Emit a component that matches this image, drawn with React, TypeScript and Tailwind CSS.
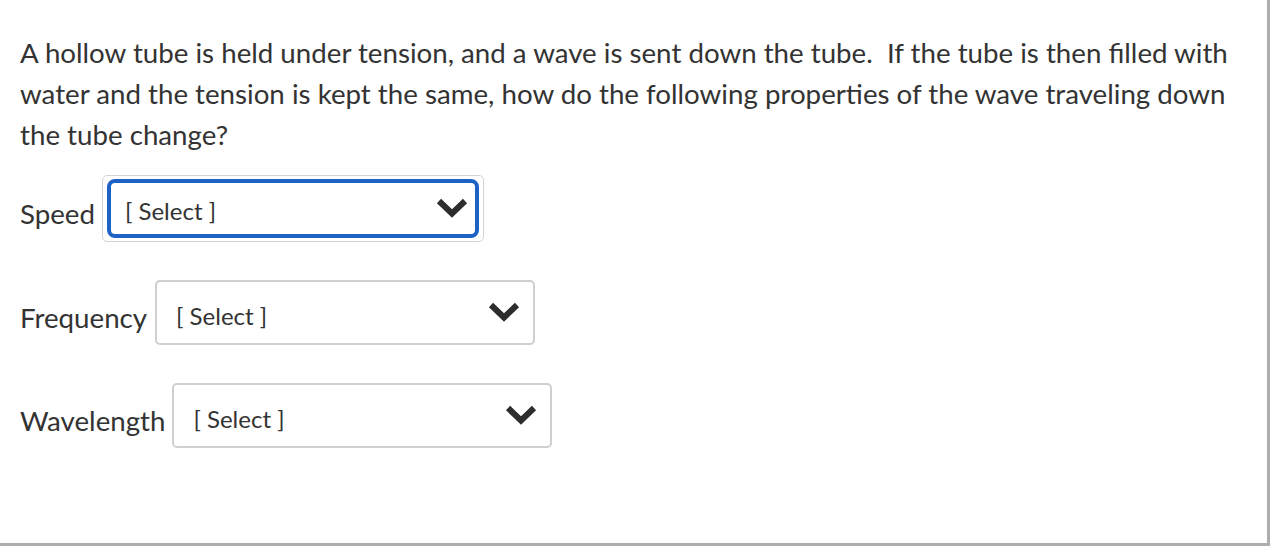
import React from "react";

function Chevron() {
  return (
    <svg width="32" height="20" viewBox="0 0 32 20" className="shrink-0 -mt-[2px]">
      <polyline
        points="3,3 16,15.5 29,3"
        fill="none"
        stroke="#2d2d2d"
        strokeWidth="6"
        strokeLinecap="butt"
        strokeLinejoin="miter"
      />
    </svg>
  );
}

function Select({ focused }: { focused?: boolean }) {
  if (focused) {
    return (
      <div className="w-[382px] h-[67px] rounded-[5px] border border-[#d4d4d4] px-[4px] py-[3px] flex">
        <div className="flex-1 rounded-[8px] border-[4px] border-[#1f62c6] flex items-center justify-between pl-[14px] pr-[7px]">
          <span className="text-[24px] text-[#333] pt-[5px]">[ Select ]</span>
          <Chevron />
        </div>
      </div>
    );
  }
  return (
    <div className="w-[380px] h-[65px] rounded-[5px] border-2 border-[#cfcfcf] flex items-center justify-between pl-[19px] pr-[13px]">
      <span className="text-[24px] text-[#333] pt-[6px]">[ Select ]</span>
      <Chevron />
    </div>
  );
}

export default function App() {
  return (
    <div
      className="w-[1270px] h-[546px] bg-white border-r-[3px] border-b-[3px] border-[#adadad] pl-5 pt-[32px] text-[#333]"
      style={{ fontFamily: "Lato, 'Open Sans', sans-serif" }}
    >
      <p className="text-[27.7px] leading-[41px] whitespace-nowrap">
        A hollow tube is held under tension, and a wave is sent down the tube.&nbsp; If the tube is then filled with
        <br />
        water and the tension is kept the same, how do the following properties of the wave traveling down
        <br />
        the tube change?
      </p>
      <div className="flex flex-col gap-[38px] mt-[20px]">
        <div className="flex items-center gap-[7px]">
          <span className="text-[27.7px] pt-[10px]">Speed</span>
          <Select focused />
        </div>
        <div className="flex items-center gap-[8px]">
          <span className="text-[27.7px] pt-[10px]">Frequency</span>
          <Select />
        </div>
        <div className="flex items-center gap-[7px]">
          <span className="text-[27.7px] pt-[10px]">Wavelength</span>
          <Select />
        </div>
      </div>
    </div>
  );
}
